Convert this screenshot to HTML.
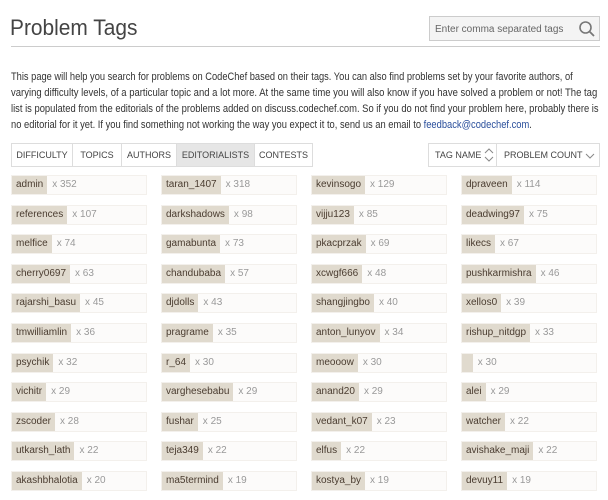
<!DOCTYPE html>
<html><head><meta charset="utf-8"><style>
*{margin:0;padding:0;box-sizing:border-box}
body{width:608px;height:500px;overflow:hidden;background:#fff;font-family:"Liberation Sans",sans-serif;color:#333;position:relative}
h1{position:absolute;left:10px;top:15px;font-size:22px;font-weight:normal;color:#444;transform:scaleX(0.95);transform-origin:0 0}
.hr{position:absolute;left:11px;right:8px;top:46px;border-top:1px solid #ccc}
.search{position:absolute;left:429px;top:16px;width:171px;height:25px;border:1px solid #ccc;background:#f4f4f4;font-size:10px;color:#666;padding:7px 0 0 5px}
.search svg{position:absolute;right:3px;top:3px}
.ln{position:absolute;left:11px;font-size:11px;white-space:nowrap;transform-origin:0 0;color:#333}
.ln a{color:#2a4f9c}
.tabs{position:absolute;left:11px;top:143px;height:24px;display:flex;border:1px solid #ddd}
.tabs div{font-size:9px;text-align:center;line-height:22px;border-right:1px solid #ddd;color:#444;white-space:nowrap}
.tabs div:last-child{border-right:none}
.tabs .on{background:#e6e6e6}
.sort{position:absolute;left:428px;top:143px;width:172px;height:24px;display:flex;border:1px solid #ddd}
.sort div{font-size:9px;line-height:22px;padding-left:8px;color:#444;position:relative;white-space:nowrap}
.cell{position:absolute;width:136px;height:20px;background:#fcfbfa;border:1px solid #f3f0ec;font-size:10px;line-height:18px;white-space:nowrap}
.cell b{font-weight:normal;background:#e0dace;color:#4a3c30;display:inline-block;padding:0 4px;height:18px;margin-right:5px}
.cell span{color:#999}
</style></head><body>
<h1>Problem Tags</h1>
<div class="hr"></div>
<div class="search">Enter comma separated tags
<svg width="18" height="18" viewBox="0 0 18 18"><circle cx="7.5" cy="7.5" r="5.5" fill="none" stroke="#777" stroke-width="1.6"/><path d="M11.5 11.5 L16 16" stroke="#777" stroke-width="1.8"/></svg></div>
<div class="ln" data-w="562" style="top:71px">This page will help you search for problems on CodeChef based on their tags. You can also find problems set by your favorite authors, of</div>
<div class="ln" data-w="586" style="top:87px">varying difficulty levels, of a particular topic and a lot more. At the same time you will also know if you have solved a problem or not! The tag</div>
<div class="ln" data-w="588" style="top:103px">list is populated from the editorials of the problems added on discuss.codechef.com. So if you do not find your problem here, probably there is</div>
<div class="ln" data-w="521" style="top:119px">no editorial for it yet. If you find something not working the way you expect it to, send us an email to <a>feedback@codechef.com</a>.</div>
<div class="tabs"><div style="width:61px">DIFFICULTY</div><div style="width:49px">TOPICS</div><div style="width:55px">AUTHORS</div><div class="on" style="width:78px">EDITORIALISTS</div><div style="width:57px">CONTESTS</div></div>
<div class="sort"><div style="width:68px;border-right:1px solid #ddd;padding-left:6px">TAG NAME<svg width="10" height="14" viewBox="0 0 10 14" style="position:absolute;left:55px;top:4px"><path d="M1 5 L5 1 L9 5 M1 9 L5 13 L9 9" fill="none" stroke="#888"/></svg></div><div style="padding-left:7px">PROBLEM COUNT<svg width="10" height="8" viewBox="0 0 10 8" style="position:absolute;left:88px;top:8px"><path d="M1 2 L5 6 L9 2" fill="none" stroke="#888"/></svg></div></div>
<div id="g"></div>
<script>
document.querySelectorAll(".ln").forEach(function(e){var w=e.scrollWidth;e.style.transform="scaleX("+(e.dataset.w/w)+")";});
var d=[["admin",352],["taran_1407",318],["kevinsogo",129],["dpraveen",114],["references",107],["darkshadows",98],["vijju123",85],["deadwing97",75],["melfice",74],["gamabunta",73],["pkacprzak",69],["likecs",67],["cherry0697",63],["chandubaba",57],["xcwgf666",48],["pushkarmishra",46],["rajarshi_basu",45],["djdolls",43],["shangjingbo",40],["xellos0",39],["tmwilliamlin",36],["pragrame",35],["anton_lunyov",34],["rishup_nitdgp",33],["psychik",32],["r_64",30],["meooow",30],["",30],["vichitr",29],["varghesebabu",29],["anand20",29],["alei",29],["zscoder",28],["fushar",25],["vedant_k07",23],["watcher",22],["utkarsh_lath",22],["teja349",22],["elfus",22],["avishake_maji",22],["akashbhalotia",20],["ma5termind",19],["kostya_by",19],["devuy11",19]];
var h="";d.forEach(function(t,i){var x=11+150*(i%4),y=175+29.6*Math.floor(i/4);h+='<div class="cell" style="left:'+x+'px;top:'+y+'px"><b>'+(t[0]||'&nbsp;')+'</b><span>x '+t[1]+'</span></div>';});
document.getElementById("g").innerHTML=h;
</script>
</body></html>
